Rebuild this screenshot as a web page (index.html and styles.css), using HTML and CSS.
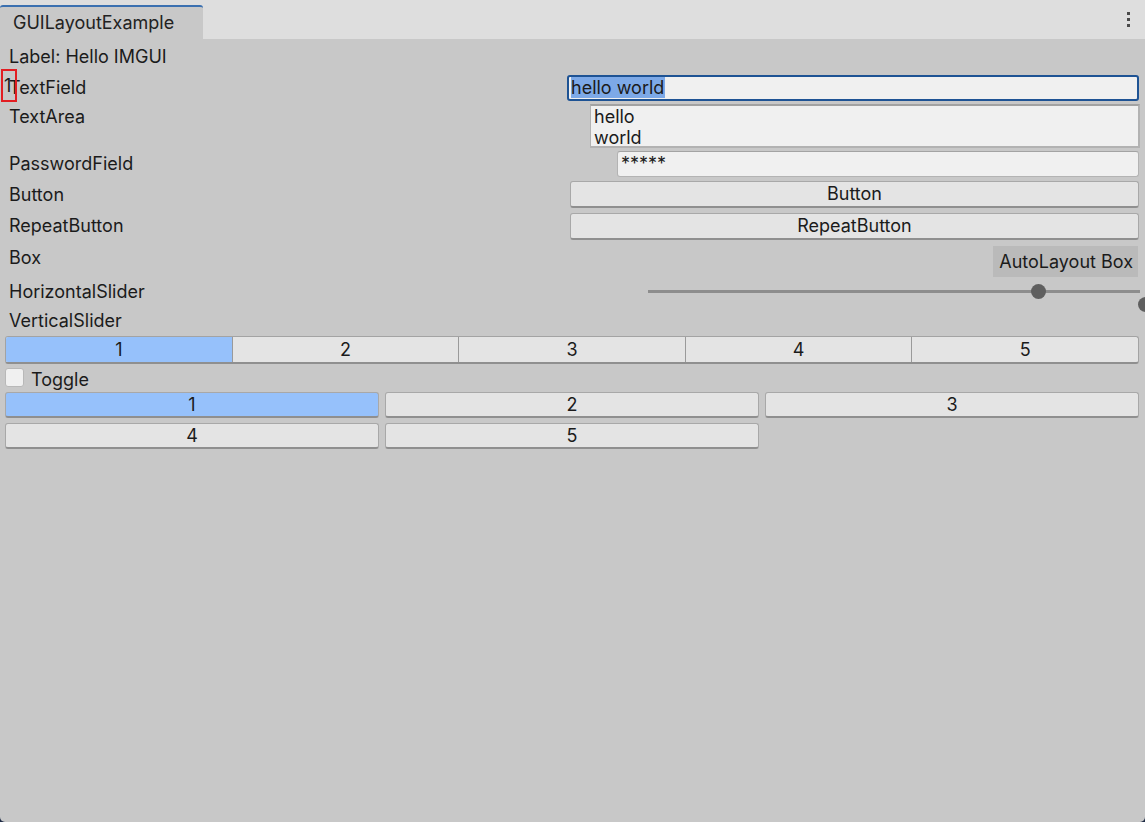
FILE: index.html
```html
<!DOCTYPE html>
<html lang="en">
  <head>
    <meta charset="UTF-8" />
    <title>GUILayoutExample</title>
    <link rel="stylesheet" href="styles.css">
  </head>
  <body>
    <div class="window">
      <div class="tabbar">
        <div class="tab">GUILayoutExample</div>
        <div class="menu"><span></span><span></span><span></span></div>
      </div>
      <div class="content">
        <div class="row row-label">
          <span class="lbl">Label: Hello IMGUI</span>
        </div>
        <div class="row row-field">
          <span class="lbl">TextField</span>
          <div class="textfield focused"><span class="sel">hello world</span></div>
          <div class="marker">1</div>
        </div>
        <div class="row row-area">
          <span class="lbl">TextArea</span>
          <div class="textarea">hello<br>world</div>
        </div>
        <div class="row row-field">
          <span class="lbl">PasswordField</span>
          <div class="textfield password">*****</div>
        </div>
        <div class="row row-btn">
          <span class="lbl">Button</span>
          <div class="btn wide">Button</div>
        </div>
        <div class="row row-btn">
          <span class="lbl">RepeatButton</span>
          <div class="btn wide">RepeatButton</div>
        </div>
        <div class="row row-box">
          <span class="lbl">Box</span>
          <div class="box">AutoLayout Box</div>
        </div>
        <div class="row row-slider">
          <span class="lbl">HorizontalSlider</span>
          <div class="hslider">
            <div class="thumb" style="left: 79.2%"></div>
          </div>
        </div>
        <div class="row row-vslider">
          <span class="lbl">VerticalSlider</span>
          <div class="vthumb"></div>
        </div>
        <div class="toolbar">
          <div class="seg on">1</div>
          <div class="seg">2</div>
          <div class="seg">3</div>
          <div class="seg">4</div>
          <div class="seg">5</div>
        </div>
        <div class="row row-toggle">
          <span class="check"></span>
          <span class="toggle-text">Toggle</span>
        </div>
        <div class="grid">
          <div class="btn on">1</div>
          <div class="btn">2</div>
          <div class="btn">3</div>
          <div class="btn">4</div>
          <div class="btn">5</div>
        </div>
      </div>
    </div>
  </body>
</html>
```

FILE: styles.css
```css
html {
  background: #1f2b45;
}
body {
  margin: 0;
  font-family: Inter, "Noto Sans", sans-serif;
  font-size: 18px;
  color: #1b1b1b;
}
.window {
  height: 822px;
  background: #c8c8c8;
  border-radius: 0 0 5px 5px;
  overflow: hidden;
}
.tabbar {
  height: 39px;
  background: #dedede;
  display: flex;
  align-items: flex-end;
  position: relative;
}
.tab {
  width: 203px;
  height: 34px;
  box-sizing: border-box;
  background: #c8c8c8;
  border-top: 2px solid #3b70b0;
  border-radius: 3px 3px 0 0;
  padding: 3px 0 0 13px;
  line-height: 25px;
  color: #222;
}
.menu {
  margin-left: auto;
  margin-right: 15px;
  align-self: center;
  display: flex;
  flex-direction: column;
  gap: 3px;
}
.menu span {
  width: 3px;
  height: 3px;
  background: #4a4a4a;
}
.content {
  padding: 5px 6px 0 5px;
}
.row {
  display: flex;
  align-items: center;
  position: relative;
}
.lbl {
  padding-left: 4px;
  line-height: 24px;
  white-space: nowrap;
}
.row-label {
  height: 24px;
}
.row-label .lbl {
  padding-top: 2px;
}
.row-field {
  height: 26px;
  margin-top: 7px;
}
.row-field .lbl {
  line-height: 24px;
}
.row-field + .row-area {
  margin-top: 3px;
}
.row-area {
  height: 44px;
  align-items: flex-start;
}
.row-area .lbl {
  padding-top: 1px;
}
.row-area + .row-field {
  margin-top: 3px;
}
.textfield {
  margin-left: auto;
  width: 572px;
  height: 26px;
  box-sizing: border-box;
  background: #f0f0f0;
  border: 1px solid #b3b3b3;
  border-top-color: #a3a3a3;
  border-radius: 3px;
  padding: 1px 3px 0;
  line-height: 22px;
}
.textfield.focused {
  border: 2px solid #1e5394;
  padding: 0 2px;
}
.textfield.password {
  width: 522px;
}
.sel {
  display: inline-block;
  background: #7da9e7;
  line-height: 21px;
  padding-right: 1px;
}
.marker {
  position: absolute;
  left: -4px;
  top: -6px;
  width: 11px;
  height: 29px;
  border: 2px solid #e21d22;
  line-height: 30px;
  padding-left: 1px;
}
.textarea {
  margin-left: auto;
  margin-right: -1px;
  width: 550px;
  height: 44px;
  box-sizing: border-box;
  background: #f0f0f0;
  border: 2px solid #b2b2b2;
  border-top-color: #a2a2a2;
  border-left-width: 1px;
  padding: 0 3px;
  line-height: 21px;
}
.row-btn {
  height: 27px;
  margin-top: 4px;
}
.row-btn + .row-btn {
  margin-top: 5px;
}
.row-btn + .row-btn .lbl {
  padding-bottom: 2px;
}
.btn {
  height: 27px;
  box-sizing: border-box;
  background: #e4e4e4;
  border: 1px solid #a8a8a8;
  border-bottom: 2px solid #8f8f8f;
  border-radius: 3px;
  text-align: center;
  line-height: 24px;
}
.btn.wide {
  margin-left: auto;
  width: 569px;
}
.btn.on {
  background: #96c1fb;
}
.row-box {
  height: 31px;
  margin-top: 6px;
  align-items: flex-start;
}
.row-box .lbl {
  line-height: 22px;
  padding-top: 1px;
}
.box {
  margin-left: auto;
  margin-right: 1px;
  background: #bababa;
  padding: 0 5px 0 6px;
  height: 31px;
  line-height: 32px;
}
.row-slider {
  height: 18px;
  margin-top: 5px;
}
.row-slider .lbl,
.row-vslider .lbl {
  padding-top: 2px;
}
.hslider {
  margin-left: auto;
  margin-right: -1px;
  width: 492px;
  height: 3px;
  background: #8d8d8d;
  position: relative;
}
.thumb {
  position: absolute;
  top: -6px;
  width: 15px;
  height: 15px;
  margin-left: -7px;
  border-radius: 50%;
  background: #5f5f5f;
}
.row-vslider {
  height: 24px;
  margin-top: 8px;
}
.vthumb {
  position: absolute;
  right: -14px;
  top: -11px;
  width: 15px;
  height: 15px;
  border-radius: 50%;
  background: #5f5f5f;
}
.toolbar {
  display: flex;
  margin-top: 4px;
  height: 28px;
  box-sizing: border-box;
  border: 1px solid #a3a3a3;
  border-bottom: 2px solid #8f8f8f;
  border-radius: 3px;
  overflow: hidden;
  background: #e4e4e4;
}
.seg {
  flex: 1;
  text-align: center;
  line-height: 25px;
  border-left: 1px solid #9a9a9a;
}
.seg:first-child {
  border-left: none;
}
.seg.on {
  background: #96c1fb;
}
.row-toggle {
  height: 20px;
  margin-top: 3px;
}
.check {
  width: 19px;
  height: 19px;
  box-sizing: border-box;
  background: #f0f0f0;
  border: 1px solid #b8b8b8;
  border-radius: 3px;
}
.toggle-text {
  margin-left: 7px;
  line-height: 24px;
  padding-top: 6px;
}
.grid {
  display: grid;
  grid-template-columns: repeat(3, 1fr);
  gap: 5px 6px;
  margin-top: 5px;
}
.grid .btn {
  height: 26px;
  line-height: 23px;
}
```
